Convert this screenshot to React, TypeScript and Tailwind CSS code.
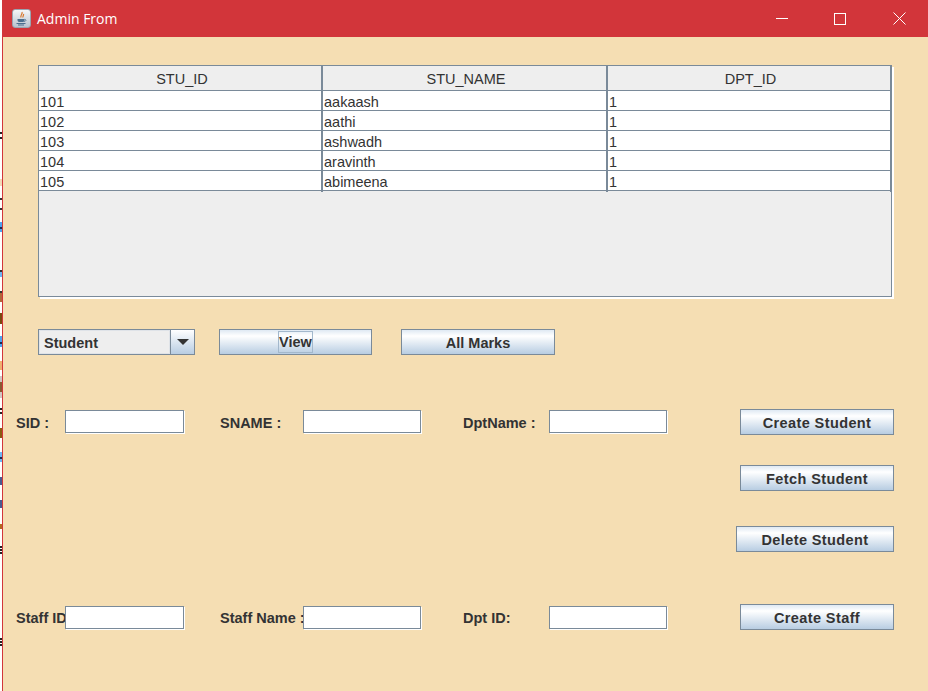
const rows = [
  { id: "101", name: "aakaash", dpt: "1" },
  { id: "102", name: "aathi", dpt: "1" },
  { id: "103", name: "ashwadh", dpt: "1" },
  { id: "104", name: "aravinth", dpt: "1" },
  { id: "105", name: "abimeena", dpt: "1" },
];

// bits of whatever sits behind the window, showing down the left edge
const specks = [
  { top: 132, height: 2, color: "#222222" },
  { top: 137, height: 2, color: "#222222" },
  { top: 179, height: 7, color: "#f3d9b8" },
  { top: 198, height: 2, color: "#333333" },
  { top: 208, height: 2, color: "#333333" },
  { top: 222, height: 5, color: "#4da3f0" },
  { top: 227, height: 2, color: "#1a2a50" },
  { top: 229, height: 3, color: "#4da3f0" },
  { top: 270, height: 2, color: "#333333" },
  { top: 272, height: 5, color: "#6db6f5" },
  { top: 291, height: 2, color: "#333333" },
  { top: 293, height: 9, color: "#b0683a" },
  { top: 313, height: 11, color: "#7a4a10" },
  { top: 336, height: 6, color: "#4da3f0" },
  { top: 342, height: 2, color: "#1a2a50" },
  { top: 344, height: 3, color: "#4da3f0" },
  { top: 361, height: 9, color: "#f0b070" },
  { top: 376, height: 6, color: "#d0c8c4" },
  { top: 382, height: 10, color: "#8a5a30" },
  { top: 392, height: 6, color: "#d0c8c4" },
  { top: 408, height: 2, color: "#222222" },
  { top: 412, height: 2, color: "#222222" },
  { top: 428, height: 10, color: "#8a5a10" },
  { top: 452, height: 5, color: "#6db6f5" },
  { top: 457, height: 2, color: "#1a2a50" },
  { top: 459, height: 3, color: "#6db6f5" },
  { top: 477, height: 8, color: "#4a5a90" },
  { top: 500, height: 8, color: "#4a5a90" },
  { top: 524, height: 5, color: "#b06a20" },
  { top: 546, height: 2, color: "#222222" },
  { top: 549, height: 2, color: "#222222" },
  { top: 552, height: 2, color: "#222222" },
  { top: 638, height: 2, color: "#222222" },
  { top: 641, height: 2, color: "#222222" },
  { top: 644, height: 2, color: "#222222" },
];

function JavaIcon() {
  return (
    <div className="flex h-[19px] w-[19px] items-center justify-center rounded-[3px] border border-[#9aa4b0] bg-gradient-to-b from-[#f4f6f8] to-[#b9c3cf]">
      <svg width="13" height="15" viewBox="0 0 13 15" fill="none">
        <path d="M7 1C8 3 5 4 6 6.500M8.500 3C9 4.500 7.500 5 8 6.500" stroke="#d9772b" strokeWidth="1.200" />
        <path d="M2.500 8h7v1.200c0 1.200-1 1.800-2 1.800h-3c-1 0-2-.6-2-1.800z" fill="#4a6f8f" />
        <path d="M9.500 8.300c2 0 2 2-.5 2.200" stroke="#4a6f8f" strokeWidth="0.800" />
        <path d="M1.500 12.500h9M3 14h6" stroke="#4a6f8f" strokeWidth="1" />
      </svg>
    </div>
  );
}

function MetalButton({ label, className }: { label: string; className: string }) {
  return (
    <button
      type="button"
      className={`flex h-[26px] items-center justify-center border border-[#7a8a99] bg-gradient-to-b from-[#dfe9f3] via-[#ffffff] via-[25%] to-[#b8cde2] pt-[4px] text-[14.5px] font-bold tracking-[0.4px] text-[#333333] ${className}`}
    >
      {label}
    </button>
  );
}

function Field({ className }: { className: string }) {
  return (
    <input
      type="text"
      className={`h-[23px] border border-[#7a8a99] bg-white shadow-[1px_1px_0_#ffffff] outline-none ${className}`}
    />
  );
}

function Label({ text, className }: { text: string; className: string }) {
  return <span className={`pt-[4px] text-[14.5px] font-bold whitespace-nowrap text-[#333333] ${className}`}>{text}</span>;
}

export default function App() {
  return (
    <div className="relative flex h-[691px] w-[928px] bg-white font-['Liberation_Sans',Arial,sans-serif]">
      <div className="relative w-[2px] shrink-0 bg-white">
        {specks.map((s) => (
          <div
            key={s.top}
            className="absolute left-0 w-[2px]"
            style={{ top: s.top, height: s.height, backgroundColor: s.color }}
          />
        ))}
      </div>

      <div className="flex min-w-0 flex-1 flex-col border-l border-[#d2353a] bg-[#f5deb3]">
        {/* title bar */}
        <div className="flex h-[37px] shrink-0 items-center bg-[#d2353a] pl-[9px] text-white">
          <JavaIcon />
          <span className="ml-[6px] font-['Open_Sans',sans-serif] text-[14px]">Admin From</span>
          <div className="ml-auto flex items-center">
            <div className="mr-[46px] h-px w-3 bg-white" />
            <div className="mr-[47px] h-[12px] w-[12px] border border-white" />
            <svg className="mr-[22px]" width="13" height="13" viewBox="0 0 13 13" stroke="white" strokeWidth="1">
              <path d="M.5.5l12 12M12.500.5l-12 12" />
            </svg>
          </div>
        </div>

        {/* student table */}
        <div className="mt-[28px] ml-[35px] flex h-[232px] w-[854px] flex-col border border-[#7a8a99] bg-[#eeeeee] shadow-[2px_2px_0_#ffffff]">
          <div className="grid h-[25px] grid-cols-[284px_285px_283px] border-b border-[#7a8a99] text-[14.5px] text-[#333333]">
            <div className="flex items-center justify-center border-r-2 border-[#7a8a99] pt-[3px] pl-[4px]">STU_ID</div>
            <div className="flex items-center justify-center border-r-2 border-[#7a8a99] pt-[3px] pl-[3px]">STU_NAME</div>
            <div className="flex items-center justify-center border-r border-[#7a8a99] pt-[3px] pl-[3px]">DPT_ID</div>
          </div>
          {rows.map((r) => (
            <div
              key={r.id}
              className="grid h-[20px] grid-cols-[284px_285px_283px] border-b border-[#7a8a99] bg-white text-[14.5px] leading-[20px] text-[#333333]"
            >
              <div className="border-r-2 border-[#7a8a99] pt-px pl-px">{r.id}</div>
              <div className="border-r-2 border-[#7a8a99] pt-px pl-px">{r.name}</div>
              <div className="border-r border-[#7a8a99] pt-px pl-px">{r.dpt}</div>
            </div>
          ))}
        </div>

        {/* selector row */}
        <div className="mt-[32px] ml-[35px] flex items-center">
          <div className="flex h-[26px] w-[157px] border border-[#7a8a99]">
            <div className="flex flex-1 items-center border border-[#dfe3e8] bg-[#eeeeee] pt-[4px] pl-[4px] text-[14.5px] font-bold text-[#333333]">
              Student
            </div>
            <div className="flex w-[24px] items-center justify-center border-l border-[#7a8a99] bg-gradient-to-b from-[#ffffff] to-[#b8cde2]">
              <div className="h-0 w-0 border-x-[6px] border-t-[6px] border-x-transparent border-t-[#333333]" />
            </div>
          </div>
          <button
            type="button"
            className="ml-[24px] flex h-[26px] w-[153px] items-center justify-center border border-[#7a8a99] bg-gradient-to-b from-[#dfe9f3] via-[#ffffff] via-[25%] to-[#b8cde2] text-[14.5px] font-bold text-[#333333]"
          >
            <span className="border border-[#a3b8cc] leading-[20px]">View</span>
          </button>
          <MetalButton label="All Marks" className="ml-[29px] w-[154px] tracking-normal" />
        </div>

        {/* student fields */}
        <div className="mt-[54px] ml-[13px] flex items-center">
          <Label text="SID :" className="w-[49px]" />
          <Field className="mb-px w-[119px]" />
          <Label text="SNAME :" className="ml-[36px] w-[83px]" />
          <Field className="mb-px w-[118px]" />
          <Label text="DptName :" className="ml-[42px] w-[86px]" />
          <Field className="mb-px w-[118px]" />
          <MetalButton label="Create Student" className="ml-[73px] w-[154px]" />
        </div>

        <MetalButton label="Fetch Student" className="mt-[30px] ml-[737px] w-[154px]" />
        <MetalButton label="Delete Student" className="mt-[35px] ml-[733px] w-[158px]" />

        {/* staff fields */}
        <div className="mt-[52px] ml-[13px] flex items-center">
          <Label text="Staff ID" className="w-[49px]" />
          <Field className="mt-px w-[119px]" />
          <Label text="Staff Name :" className="ml-[36px] w-[83px]" />
          <Field className="mt-px w-[118px]" />
          <Label text="Dpt ID:" className="ml-[42px] w-[86px]" />
          <Field className="mt-px w-[118px]" />
          <MetalButton label="Create Staff" className="ml-[73px] w-[154px]" />
        </div>
      </div>
    </div>
  );
}
